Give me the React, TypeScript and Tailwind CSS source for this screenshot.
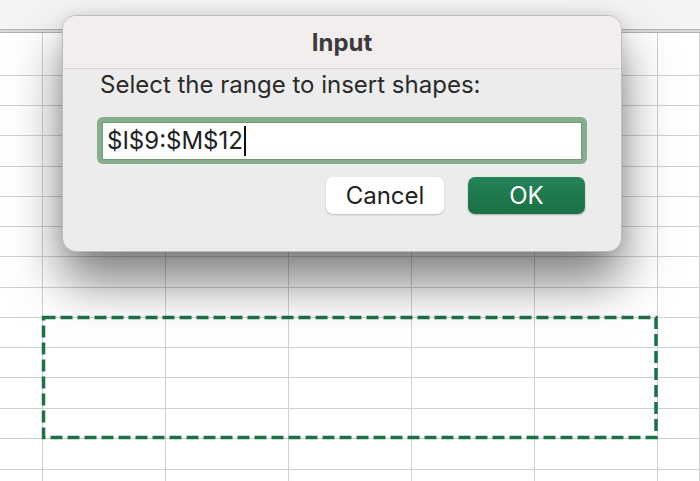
import React from "react";

const rowHeights = [43, 30, 30, 31, 30, 30, 30, 31, 30, 30, 30, 31, 30, 31, 20];
const colClasses = ["w-[43px]", "w-[123px]", "w-[123px]", "w-[123px]", "w-[123px]", "w-[123px]", "flex-1"];

function Sheet() {
  return (
    <div className="flex flex-col">
      <div className="h-[29px] bg-[#f4f4f4]" />
      <div className="h-[4px] border-y border-[#b0b0b0] bg-[#dadada]" />
      {rowHeights.map((h, i) => (
        <div key={i} className="flex" style={{ height: h }}>
          {colClasses.map((c, j) => (
            <div key={j} className={`${c} shrink-0 border-b border-r border-[#d0d0d0]`} />
          ))}
        </div>
      ))}
    </div>
  );
}

function Marquee() {
  return (
    <svg className="pointer-events-none absolute left-0 top-0" width="700" height="481">
      <rect
        x="43.5"
        y="317.5"
        width="612.5"
        height="120"
        fill="none"
        stroke="#1d7245"
        strokeWidth="3.5"
        strokeDasharray="12 5"
      />
    </svg>
  );
}

function InputDialog() {
  return (
    <div className="absolute left-[62px] top-[15px] flex h-[237px] w-[560px] flex-col overflow-hidden rounded-[14px] border border-[#bdbdbd] bg-[#ececec] shadow-[0_30px_50px_rgba(0,0,0,0.5),0_0_14px_rgba(0,0,0,0.1)]">
      <div className="flex h-[53px] shrink-0 items-center justify-center border-b border-[#d7d2d2] bg-[#f3eeee] pt-[1px] text-[24px] font-bold text-[#3b3b3b]">
        Input
      </div>
      <div className="flex flex-col px-[34px]">
        <div className="ml-[3px] mt-[2px] h-[28px] text-[24px] leading-[28px] text-[#2a2a2a]">
          Select the range to insert shapes:
        </div>
        <div className="mt-[18px] h-[47px] rounded-[6px] bg-[#87ad8f] p-[5px] pb-[4px]">
          <div className="flex h-full items-center border border-[#6f9a78] bg-white pl-[4px] text-[24px] text-[#222]">
            <span>$I$9:$M$12</span>
            <span className="ml-[1px] h-[30px] w-[2px] bg-[#111]" />
          </div>
        </div>
        <div className="mt-[13px] flex justify-end gap-[24px] pr-[2px]">
          <button className="flex h-[37px] w-[118px] items-center justify-center rounded-[7px] bg-white text-[24px] text-[#222] shadow-[0_1px_2px_rgba(0,0,0,0.2)]">
            Cancel
          </button>
          <button className="flex h-[37px] w-[117px] items-center justify-center rounded-[7px] bg-gradient-to-b from-[#238457] to-[#1b6f45] text-[24px] text-white shadow-[0_1px_2px_rgba(0,0,0,0.25)]">
            OK
          </button>
        </div>
      </div>
    </div>
  );
}

export default function App() {
  return (
    <div className="relative h-[481px] w-[700px] overflow-hidden bg-white font-['Inter',sans-serif]">
      <Sheet />
      <Marquee />
      <InputDialog />
    </div>
  );
}
